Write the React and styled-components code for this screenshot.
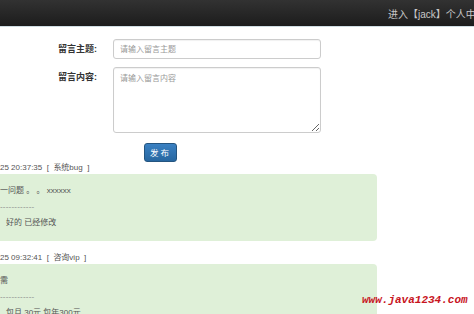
import React from "react";
import styled, { createGlobalStyle } from "styled-components";

const Global = createGlobalStyle`
  html, body { margin: 0; padding: 0; background: #fff; overflow: hidden; }
  body { font-family: "Liberation Sans", "Noto Sans CJK SC", sans-serif; }
  * { box-sizing: border-box; }
`;

const Page = styled.div`
  position: relative;
  width: 474px;
  height: 314px;
  overflow: hidden;
  display: flex;
  flex-direction: column;
`;

const Navbar = styled.div`
  height: 27px;
  flex: none;
  background: linear-gradient(#323232, #1c1c1c);
  border-bottom: 1px solid #cfdde3;
  padding-left: 388px;
  display: flex;
  align-items: center;
  white-space: nowrap;
  overflow: hidden;
  color: #c8c8c8;
  font-size: 10px;
`;

const Form = styled.form`
  padding-top: 12px;
  display: flex;
  flex-direction: column;
  gap: 8px;
`;

const Row = styled.div`
  display: grid;
  grid-template-columns: 97px 208px;
  column-gap: 16px;
`;

const Label = styled.label`
  text-align: right;
  font-weight: bold;
  font-size: 9px;
  line-height: 12px;
  padding-top: ${(p) => p.$top}px;
  color: #333;
`;

const Input = styled.input`
  height: 20px;
  border: 1px solid #ccc;
  border-radius: 3px;
  padding: 0 6px;
  font-size: 8px;
  font-family: inherit;
  box-shadow: inset 0 1px 1px rgba(0,0,0,0.06);
  &::placeholder { color: #999; }
`;

const TextArea = styled.textarea`
  height: 66px;
  border: 1px solid #ccc;
  border-radius: 3px;
  padding: 4px 6px;
  font-size: 8px;
  font-family: inherit;
  box-shadow: inset 0 1px 1px rgba(0,0,0,0.06);
  &::placeholder { color: #999; }
`;

const ButtonRow = styled.div`
  padding-left: 144px;
  margin-top: 1px;
`;

const Button = styled.button`
  width: 33px;
  height: 19px;
  padding: 0;
  border: 1px solid #245580;
  border-radius: 3px;
  background: linear-gradient(#3a80c2, #2767a0);
  color: #fff;
  font-family: inherit;
  font-size: 8.5px;
  letter-spacing: 2px;
`;

const Messages = styled.div`
  display: flex;
  flex-direction: column;
`;

const MsgHeader = styled.div`
  height: 12px;
  line-height: 12px;
  font-size: 8px;
  color: #555;
  white-space: pre;
  margin-top: ${(p) => p.$mt || 0}px;
`;

const MsgBox = styled.div`
  width: 377px;
  background: #dff0d8;
  border-radius: 0 4px 4px 0;
  padding: 9px 0 10px;
  font-size: 8px;
  color: #555;
`;

const Line = styled.div`
  line-height: 16px;
  white-space: pre;
  padding-left: ${(p) => p.$indent || 0}px;
`;

const Dashes = styled(Line)`
  color: #888;
  letter-spacing: 0.2px;
`;

const Watermark = styled.div`
  position: absolute;
  left: 362px;
  top: 294px;
  font-family: "Liberation Mono", monospace;
  font-weight: bold;
  font-style: italic;
  font-size: 11px;
  color: #c8141e;
`;

const messages = [
  {
    head: "25 20:37:35  [  系统bug  ]",
    lines: ["一问题 。 。 xxxxxx"],
    reply: "好的 已经修改",
  },
  {
    head: "25 09:32:41  [  咨询vip  ]",
    lines: ["需"],
    reply: "包月 30元 包年300元",
  },
];

export default function App() {
  return (
    <>
      <Global />
      <Page>
        <Navbar>进入【jack】个人中心</Navbar>
        <Form onSubmit={(e) => e.preventDefault()}>
          <Row>
            <Label $top={4}>留言主题:</Label>
            <Input placeholder="请输入留言主题" />
          </Row>
          <Row>
            <Label $top={4}>留言内容:</Label>
            <TextArea placeholder="请输入留言内容" />
          </Row>
          <ButtonRow>
            <Button type="submit">发布</Button>
          </ButtonRow>
        </Form>
        <Messages>
          {messages.map((m, i) => (
            <React.Fragment key={i}>
              <MsgHeader $mt={i === 0 ? 0 : 11}>{m.head}</MsgHeader>
              <MsgBox>
                {m.lines.map((l, j) => (
                  <Line key={j}>{l}</Line>
                ))}
                <Dashes>------------</Dashes>
                <Line $indent={6}>{m.reply}</Line>
              </MsgBox>
            </React.Fragment>
          ))}
        </Messages>
        <Watermark>www.java1234.com</Watermark>
      </Page>
    </>
  );
}
